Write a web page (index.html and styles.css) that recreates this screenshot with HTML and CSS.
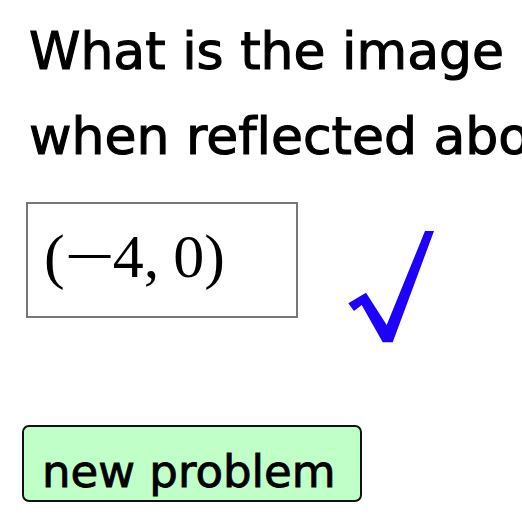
FILE: index.html
```html
<!DOCTYPE html>
<html lang="en">
<head>
<meta charset="utf-8">
<title>Problem</title>
<link rel="stylesheet" href="styles.css">
</head>
<body>
<main class="page">
  <p class="question">What is the image of the point (4, 0)<br>when reflected about the y-axis?</p>
  <div class="answer-row">
    <div class="answer-box">
      <span class="math">(<span class="minus">−</span>4,<span class="thin"></span>0)</span>
    </div>
    <svg class="check" viewBox="0 0 86 112" width="86" height="112" aria-label="correct">
      <polygon fill="#1e00ff" points="0.3,72.3 18,61.7 38.7,94 77,0 86,0 44.7,111.3 34.7,111.3 13.7,74 6,80"/>
    </svg>
  </div>
  <button class="new-problem" type="button">new problem</button>
</main>
</body>
</html>
```
FILE: styles.css
```css
html, body {
  margin: 0;
  padding: 0;
  background: #ffffff;
  overflow: hidden;
}

.page {
  padding: 9px 0 0 26px;
  font-family: "DejaVu Sans", sans-serif;
  color: #000;
  font-variant-ligatures: none;
}

.question {
  margin: 0 0 0 3px;
  font-size: 52px;
  line-height: 85px;
  white-space: nowrap;
  -webkit-text-stroke: 1.1px #000;
}

.answer-row {
  display: flex;
  align-items: flex-start;
  margin-top: 23px;
}

.answer-box {
  box-sizing: border-box;
  width: 272px;
  height: 116px;
  border: 2px solid #777777;
  padding: 17px 0 0 16px;
}

.math {
  display: block;
  font-family: "Liberation Serif", "DejaVu Serif", serif;
  font-size: 62px;
  line-height: 70px;
  white-space: nowrap;
}

.minus {
  display: inline-block;
  margin: 0 6px 0 7px;
  transform: scaleX(1.45);
}

.thin {
  display: inline-block;
  width: 14px;
}

.check {
  display: block;
  margin: 29px 0 0 50px;
}

.new-problem {
  display: block;
  box-sizing: border-box;
  margin: 82px 0 0 -4px;
  height: 77px;
  padding: 16px 24px 0 18px;
  border: 2px solid #111111;
  border-radius: 7px;
  background: #c0ffc8;
  font-family: "DejaVu Sans", sans-serif;
  font-size: 45px;
  line-height: 57px;
  color: #000;
  text-align: left;
  -webkit-text-stroke: 0.9px #000;
}
```
